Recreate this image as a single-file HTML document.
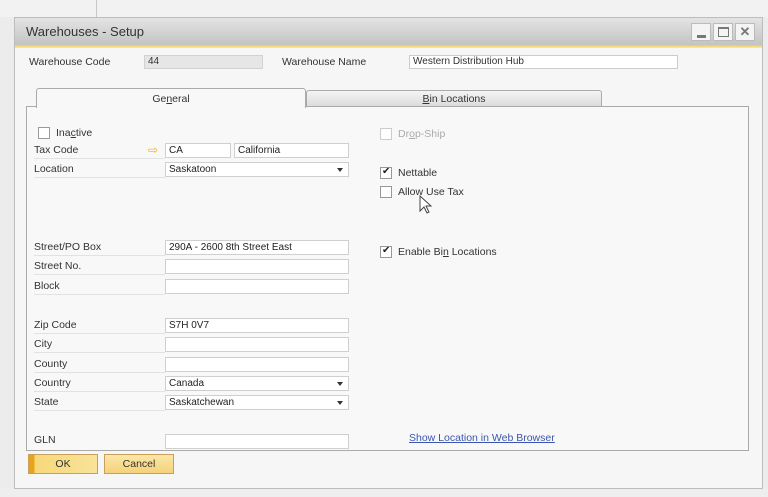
<!DOCTYPE html>
<html><head><style>
*{box-sizing:border-box;margin:0;padding:0}
body{width:768px;height:497px;overflow:hidden;background:#ececec;font-family:"Liberation Sans",sans-serif;font-size:10.5px;color:#333;position:relative}
.a{position:absolute}
.lbl{position:absolute;left:34px;width:131px;height:17px;border-bottom:1px solid #e2e2e2;padding-top:2px}
.f{position:absolute;left:165px;width:184px;height:15px;background:#fff;border:1px solid #cfcfcf;padding:1px 3px;font-size:10px;color:#222}
.dd:after{content:"";position:absolute;right:5px;top:5px;border-left:3.5px solid transparent;border-right:3.5px solid transparent;border-top:4px solid #333}
.cb{position:absolute;width:12px;height:12px;border:1px solid #999;background:#fff}
.ck:after{content:"✔";position:absolute;left:1px;top:-2px;font-size:10px;color:#222}
.ct{position:absolute;font-size:10.5px}
</style></head><body>
<div class="a" style="left:0;top:0;width:768px;height:17px;background:#f2f2f2"></div>
<div class="a" style="left:96px;top:0;width:1px;height:17px;background:#c8c8c8"></div>
<div class="a" style="left:96px;top:488px;width:1px;height:9px;background:#c8c8c8"></div>
<div class="a" style="left:0;top:488px;width:768px;height:9px;background:#eeeeee"></div>
<!-- dialog -->
<div class="a" style="left:14px;top:17px;width:749px;height:472px;background:#f6f6f6;border:1px solid #bdbdbd"></div>
<div class="a" style="left:15px;top:18px;width:747px;height:28px;background:linear-gradient(#e4e4e4,#c2c2c2)"></div>
<div class="a" style="left:15px;top:45px;width:747px;height:3px;background:linear-gradient(#f2c94a,#fbeaa8)"></div>
<div class="a" style="left:26px;top:24px;font-size:13px;color:#333">Warehouses - Setup</div>
<div class="a" style="left:691px;top:23px;width:20px;height:18px;background:#f4f4f4;border:1px solid #bbb"><div class="a" style="left:5px;top:11px;width:9px;height:3px;background:#777"></div></div>
<div class="a" style="left:713px;top:23px;width:20px;height:18px;background:#f4f4f4;border:1px solid #bbb"><div class="a" style="left:4px;top:3px;width:11px;height:10px;border:1.5px solid #777;border-top-width:2.5px"></div></div>
<div class="a" style="left:735px;top:23px;width:20px;height:18px;background:#f4f4f4;border:1px solid #bbb;text-align:center;font-size:13px;line-height:15px;color:#777;font-weight:bold">✕</div>

<div class="a" style="left:29px;top:56px">Warehouse Code</div>
<div class="a" style="left:144px;top:55px;width:119px;height:14px;background:#e6e6e6;border:1px solid #d2d2d2;font-size:10px;padding:0 3px">44</div>
<div class="a" style="left:282px;top:56px">Warehouse Name</div>
<div class="a" style="left:409px;top:55px;width:269px;height:14px;background:#fff;border:1px solid #ccc;font-size:10px;padding:0 3px">Western Distribution Hub</div>

<!-- tabs -->
<div class="a" style="left:26px;top:106px;width:339px;height:345px;border-left:1px solid #aaa"></div>
<div class="a" style="left:26px;top:106px;width:723px;height:345px;border:1px solid #aaa;border-top:none;background:#f8f8f8"></div>
<div class="a" style="left:305px;top:106px;width:444px;height:1px;background:#aaa"></div>
<div class="a" style="left:26px;top:106px;width:11px;height:1px;background:#aaa"></div>
<div class="a" style="left:36px;top:88px;width:270px;height:20px;background:#f8f8f8;border:1px solid #aaa;border-bottom:none;border-radius:3px 3px 0 0;text-align:center;padding-top:4px">Ge<u>n</u>eral</div>
<div class="a" style="left:306px;top:90px;width:296px;height:16px;background:linear-gradient(#f4f4f4,#dcdcdc);border:1px solid #aaa;border-bottom:none;border-radius:3px 3px 0 0;text-align:center;padding-top:2px"><u>B</u>in Locations</div>

<div class="cb" style="left:38px;top:127px"></div>
<div class="ct" style="left:56px;top:127px">Ina<u>c</u>tive</div>
<div class="lbl" style="top:142px">Tax Code</div>
<div class="a" style="left:148px;top:143px;color:#f0b400;font-size:12px">⇨</div>
<div class="f" style="top:143px;width:66px">CA</div>
<div class="f" style="top:143px;left:234px;width:115px">California</div>
<div class="lbl" style="top:161px">Location</div>
<div class="f dd" style="top:162px">Saskatoon</div>

<div class="lbl" style="top:239px">Street/PO Box</div>
<div class="f" style="top:240px">290A - 2600 8th Street East</div>
<div class="lbl" style="top:258px">Street No.</div>
<div class="f" style="top:259px"></div>
<div class="lbl" style="top:278px">Block</div>
<div class="f" style="top:279px"></div>
<div class="lbl" style="top:317px">Zip Code</div>
<div class="f" style="top:318px">S7H 0V7</div>
<div class="lbl" style="top:336px">City</div>
<div class="f" style="top:337px"></div>
<div class="lbl" style="top:356px">County</div>
<div class="f" style="top:357px"></div>
<div class="lbl" style="top:375px">Country</div>
<div class="f dd" style="top:376px">Canada</div>
<div class="lbl" style="top:394px">State</div>
<div class="f dd" style="top:395px">Saskatchewan</div>
<div class="lbl" style="top:432px;border-bottom:none">GLN</div>
<div class="f" style="top:434px"></div>

<div class="cb" style="left:380px;top:128px;border-color:#ccc"></div>
<div class="ct" style="left:398px;top:128px;color:#aaa">Dr<u>o</u>p-Ship</div>
<div class="cb ck" style="left:380px;top:167px"></div>
<div class="ct" style="left:398px;top:167px">Nettable</div>
<div class="cb" style="left:380px;top:186px"></div>
<div class="ct" style="left:398px;top:186px">Allow Use Tax</div>
<svg class="a" style="left:419px;top:195px" width="14" height="20"><path d="M1 1 L1 16 L5 12 L8 18 L10 17 L7 11 L12 11 Z" fill="#fff" stroke="#444" stroke-width="1"/></svg>
<div class="cb ck" style="left:380px;top:246px"></div>
<div class="ct" style="left:398px;top:246px">Enable Bi<u>n</u> Locations</div>
<div class="a" style="left:409px;top:432px;color:#3a56b0;text-decoration:underline">Show Location in Web Browser</div>

<div class="a" style="left:28px;top:454px;width:70px;height:20px;background:linear-gradient(90deg,#e9a21c 0,#e9a21c 5px,#f7d97a 6px,#f9e39a);border:1px solid #c9a05a;text-align:center;padding-top:3px">OK</div>
<div class="a" style="left:104px;top:454px;width:70px;height:20px;background:linear-gradient(#fbe7a6,#f5d27a);border:1px solid #c9a05a;text-align:center;padding-top:3px">Cancel</div>
</body></html>
